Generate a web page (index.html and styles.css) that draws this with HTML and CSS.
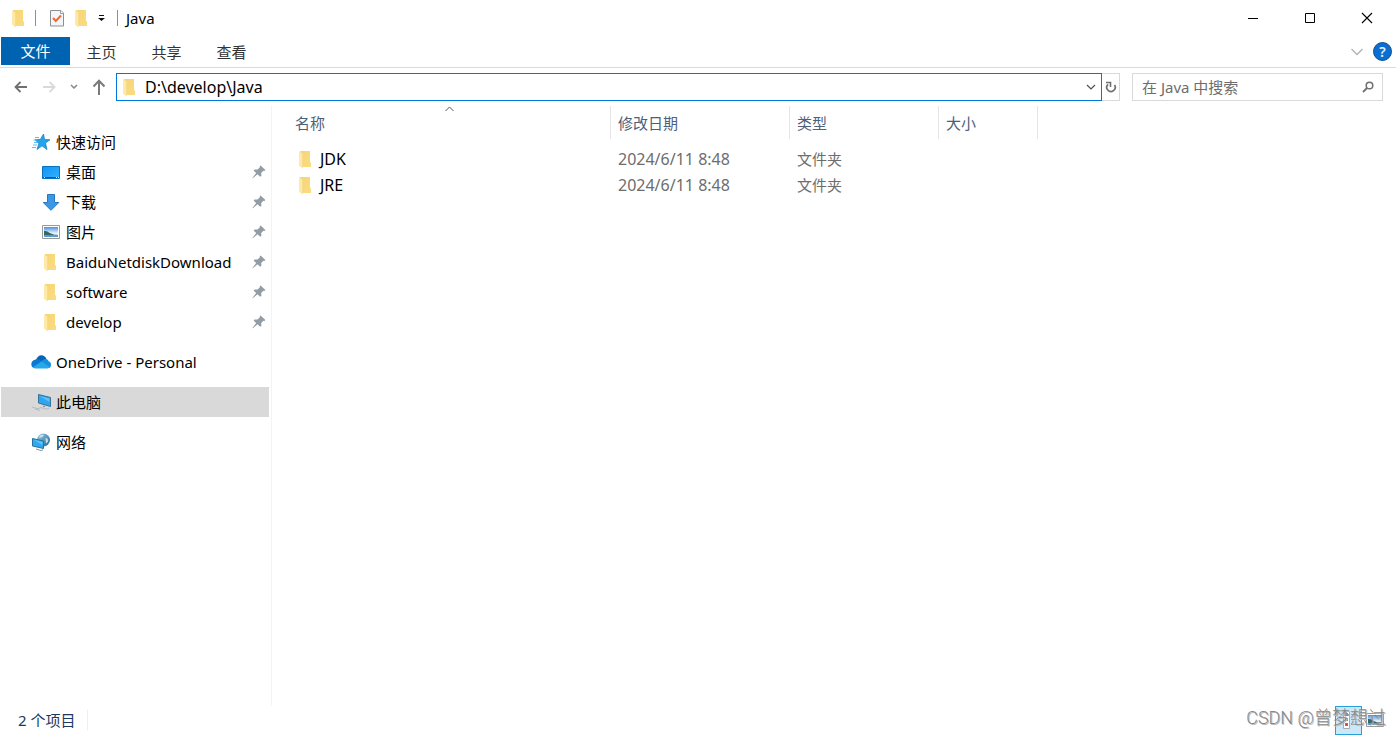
FILE: index.html
```html
<!DOCTYPE html>
<html lang="zh-CN">
<head>
<meta charset="utf-8">
<title>Java</title>
<link rel="stylesheet" href="styles.css">
</head>
<body>
<svg class="defs" aria-hidden="true">
  <defs>
    <linearGradient id="gold" x1="0" y1="0" x2="1" y2="1"><stop offset="0" stop-color="#f5d573"/><stop offset="1" stop-color="#fbdc84"/></linearGradient>
    <linearGradient id="blue" x1="0" y1="0" x2="1" y2="1"><stop offset="0" stop-color="#0f95f5"/><stop offset="1" stop-color="#35b0ff"/></linearGradient>
    <linearGradient id="sky" x1="0" y1="0" x2="0" y2="1"><stop offset="0" stop-color="#4a8fe0"/><stop offset=".6" stop-color="#e2f1fc"/></linearGradient>
    <linearGradient id="globe" x1="0" y1="0" x2="1" y2="1"><stop offset="0" stop-color="#9cc8dc"/><stop offset="1" stop-color="#22699c"/></linearGradient>
    <symbol id="folder" viewBox="0 0 14 18">
      <path d="M2 1h10v11l1 .5V17H4z" fill="url(#gold)"/>
      <path d="M1 1.200 4.800 4v13.200L4 18 1 15.700z" fill="#ffe9a8"/>
      <path d="M4.800 4v13.200L4 18V4z" fill="#f5d98a"/>
    </symbol>
    <symbol id="pin" viewBox="0 0 14 14">
      <path d="M8.600.6 13.400 5l-1 .9-1-.2-2.200 2.200.2 2.800-1.200 1-2.700-2.500L.8 13.300l-.4-.4 3.800-4.800-2.600-2.600 1-1.100 3 .1 2.300-2.200-.3-.9z" fill="#929ca4"/>
    </symbol>
    <symbol id="picture" viewBox="0 0 18 14">
      <path d="M.5.5h17v13H.5z" fill="#fff" stroke="#999"/>
      <path d="M2 2h14v10H2z" fill="url(#sky)"/>
      <path d="M2 6c3-.5 4 1 7 2.500s4 1 7 1.500H2z" fill="#35676a"/>
      <path d="M2 10h14v2H2z" fill="#5d9bcc"/>
    </symbol>
  </defs>
</svg>

<div class="window">
  <header class="titlebar">
    <svg class="folder" aria-hidden="true"><use href="#folder"/></svg>
    <span class="divider"></span>
    <button class="plain quick" aria-label="属性"><svg width="14" height="18" viewBox="0 0 14 18"><path d="M.5 1.500H11L13.500 4v13H.5z" fill="#f3f6f9" stroke="#8c8f92"/><path d="M10.500 1.500V4.500h3" fill="#fff" stroke="#999"/><path d="m3 9 2.800 3L11 6.500" fill="none" stroke="#ed6b32" stroke-width="2"/></svg></button>
    <button class="plain quick" aria-label="新建文件夹"><svg class="folder" aria-hidden="true"><use href="#folder"/></svg></button>
    <button class="plain quick" aria-label="自定义快速访问工具栏"><svg width="7" height="6" viewBox="0 0 7 6"><path d="M1 0h5v1H1zM0 3h7L3.500 6z" fill="#111"/></svg></button>
    <span class="divider"></span>
    <h1 class="title">Java</h1>
    <div class="controls">
      <button class="plain control" aria-label="最小化"><svg width="12" height="12"><path d="M1 6.500h10" stroke="#000"/></svg></button>
      <button class="plain control" aria-label="最大化"><svg width="12" height="12"><path d="M1.500 1.500h9v9h-9z" fill="none" stroke="#000"/></svg></button>
      <button class="plain control" aria-label="关闭"><svg width="12" height="12"><path d="m1 1 10 10M11 1 1 11" stroke="#000" stroke-width="1.100"/></svg></button>
    </div>
  </header>

  <nav class="ribbon">
    <button class="plain tab file">文件</button>
    <button class="plain tab">主页</button>
    <button class="plain tab">共享</button>
    <button class="plain tab">查看</button>
    <div class="ribbon-end">
      <button class="plain" aria-label="展开功能区"><svg width="12" height="8"><path d="m.5 1 5.500 5.500L11.500 1" fill="none" stroke="#b5b5b5" stroke-width="1.500"/></svg></button>
      <button class="plain help" aria-label="帮助">?</button>
    </div>
  </nav>

  <div class="navbar">
    <div class="arrows">
      <button class="plain" aria-label="后退"><svg width="14" height="14"><path d="M1.500 7H13M6.500 2l-5 5 5 5" fill="none" stroke="#707070" stroke-width="1.800"/></svg></button>
      <button class="plain" aria-label="前进"><svg width="14" height="14"><path d="M1 7h11.500M7.500 2l5 5-5 5" fill="none" stroke="#d9d9d9" stroke-width="1.800"/></svg></button>
      <button class="plain" aria-label="最近位置"><svg width="8" height="6"><path d="m1 1 3 3 3-3" fill="none" stroke="#858585" stroke-width="1.500"/></svg></button>
      <button class="plain" aria-label="上移"><svg width="14" height="16"><path d="M7 1.500V16M1.500 7.500 7 1.800l5.500 5.700" fill="none" stroke="#7a7a7a" stroke-width="2"/></svg></button>
    </div>
    <div class="address">
      <svg class="folder" aria-hidden="true"><use href="#folder"/></svg>
      <input class="field path" type="text" value="D:\develop\Java" aria-label="地址">
      <button class="plain" aria-label="以前的位置"><svg width="10" height="7"><path d="m1 1 4 4 4-4" fill="none" stroke="#505050" stroke-width="1.200"/></svg></button>
    </div>
    <button class="plain refresh" aria-label="刷新"><svg width="12" height="12" viewBox="0 0 12 12"><path d="M3 3.300A4.200 4.200 0 1 0 9.500 4" fill="none" stroke="#707070" stroke-width="1.700"/><path d="M1 1.500h4.500V6" fill="none" stroke="#707070" stroke-width="1.600"/></svg></button>
    <div class="search">
      <input class="field query" type="text" placeholder="在 Java 中搜索" aria-label="搜索">
      <button class="plain" aria-label="搜索"><svg width="12" height="12"><circle cx="7.500" cy="4.500" r="3.300" fill="none" stroke="#707070" stroke-width="1.500"/><path d="M5 7 1 11" stroke="#707070" stroke-width="1.800"/></svg></button>
    </div>
  </div>

  <div class="body">
    <aside class="sidebar">
      <a class="place" href="#quick">
        <svg class="icon" viewBox="0 0 20 18"><path d="m12.500 1 1 5.500 5.500.2-4.500 3.400 1.500 6.400-5-3.700-5 3.700 1.900-6L4 6.700l5.500-.4z" fill="#28a2ea" stroke="#1583c8" stroke-width=".8"/><path d="M4 4.500h4M2.500 7h4M3 9.500h3M2 12h4M1 14.500h4" stroke="#63baf0" stroke-width="1"/></svg>
        快速访问</a>
      <a class="place sub" href="#desktop">
        <svg class="icon" viewBox="0 0 20 18"><path d="M1.500 3.500h17v12h-17z" fill="url(#blue)" stroke="#0872bd"/><path d="M2 14.500h16" stroke="#075995"/><path d="M3 14.500h1m11 0h1m1 0h1" stroke="#fff"/></svg>
        桌面<svg class="pin" aria-hidden="true"><use href="#pin"/></svg></a>
      <a class="place sub" href="#downloads">
        <svg class="icon" viewBox="0 0 20 18"><path d="M6.500 1.500h7v8h4.300L10 17.300 2.200 9.500h4.300z" fill="#3c98e6" stroke="#2878be"/></svg>
        下载<svg class="pin" aria-hidden="true"><use href="#pin"/></svg></a>
      <a class="place sub" href="#pictures">
        <svg class="icon" viewBox="0 0 20 18"><use href="#picture" x="1" y="2" width="18" height="14"/></svg>
        图片<svg class="pin" aria-hidden="true"><use href="#pin"/></svg></a>
      <a class="place sub" href="#baidu">
        <svg class="icon" viewBox="0 0 20 18"><use href="#folder" x="2" y="0" width="14" height="18"/></svg>
        BaiduNetdiskDownload<svg class="pin" aria-hidden="true"><use href="#pin"/></svg></a>
      <a class="place sub" href="#software">
        <svg class="icon" viewBox="0 0 20 18"><use href="#folder" x="2" y="0" width="14" height="18"/></svg>
        software<svg class="pin" aria-hidden="true"><use href="#pin"/></svg></a>
      <a class="place sub" href="#develop">
        <svg class="icon" viewBox="0 0 20 18"><use href="#folder" x="2" y="0" width="14" height="18"/></svg>
        develop<svg class="pin" aria-hidden="true"><use href="#pin"/></svg></a>
      <a class="place group" href="#onedrive">
        <svg class="icon" viewBox="0 0 20 18"><path d="M5 7.500C6 1.500 13 0 15.500 6L10 11 4 9z" fill="#0364b8"/><path d="M4.500 6.500c3-1 5 .5 7 2L4 15.200C-1 15-1 7.500 4.500 6.500z" fill="#0b78d1"/><path d="M10 9c2-4 7-4 7.500-.8C21 9 20.500 14.500 18 15l-9-4z" fill="#1490df"/><path d="m2 14 8.500-5.500L19 14c-1 1.300-2 1.500-4 1.500H4z" fill="#28a8ea"/></svg>
        OneDrive - Personal</a>
      <a class="place group selected" href="#pc" aria-current="page">
        <svg class="icon" viewBox="0 0 20 18"><path d="m7.500 1.500 12 3v9l-12-3.500z" fill="#2fa5f0" stroke="#3a7195"/><path d="m8.500 3 10 2.500V9z" fill="#5cc2fa"/><path d="m12 13 2 .700" stroke="#71828c"/><path d="m1 14 6 1.800 3-1.300 5 1.700 3-1M4 16l5 1.500" fill="none" stroke="#a9b2b9" stroke-width=".8"/></svg>
        此电脑</a>
      <a class="place group" href="#network">
        <svg class="icon" viewBox="0 0 20 18"><circle cx="12.500" cy="7" r="6.500" fill="url(#globe)"/><path d="M9 2.500c2-1 3-1 4-.5l-1.500 2-3.500 1zM14.500 5l2 .5.500 3-2 2z" fill="#c8e3ee"/><path d="m1.500 5.500 11 2.500v7.500l-11-2.500z" fill="#2fa8f2" stroke="#29719d"/><path d="m2.500 6.800 9 2.200v3z" fill="#5fc5fb"/><path d="m5 16 5 1.500 2-.7" fill="none" stroke="#8496a2"/></svg>
        网络</a>
    </aside>

    <main class="files">
      <table class="list">
        <colgroup><col class="c-name"><col class="c-date"><col class="c-type"><col class="c-size"></colgroup>
        <thead>
          <tr>
            <th aria-sort="ascending">名称<svg class="sort" width="9" height="6"><path d="m.5 5 4-4 4 4" fill="none" stroke="#555"/></svg></th>
            <th>修改日期</th><th>类型</th><th>大小</th>
          </tr>
        </thead>
        <tbody>
          <tr><td class="name"><span class="entry"><svg class="folder" aria-hidden="true"><use href="#folder"/></svg>JDK</span></td><td class="date">2024/6/11 8:48</td><td>文件夹</td><td></td></tr>
          <tr><td class="name"><span class="entry"><svg class="folder" aria-hidden="true"><use href="#folder"/></svg>JRE</span></td><td class="date">2024/6/11 8:48</td><td>文件夹</td><td></td></tr>
        </tbody>
      </table>
    </main>
  </div>

  <footer class="status">
    <span class="count">2 个项目</span>
    <div class="views">
      <button class="plain view active" aria-label="详细信息"><svg width="20" height="20"><path d="M4.500 1.500h6v17h-6z" fill="#fff" stroke="#a5adb2"/><path d="M6 3h3v3H6zm0 5h3v3H6zm0 5h3v3H6z" fill="#71838f"/><path d="M7 9h1v1H7z" fill="#e09a35"/><path d="M7 14h1v1H7z" fill="#d4352b"/><path d="M12 4.500h6m-6 5h6m-6 5h6" stroke="#8da4b2"/></svg></button>
      <button class="plain view" aria-label="大图标"><svg width="18" height="14"><use href="#picture"/></svg></button>
    </div>
    <span class="watermark">CSDN @曾梦想过</span>
  </footer>
</div>
</body>
</html>
```
FILE: styles.css
```css
* { box-sizing: border-box; }

body {
  margin: 0;
  background: #fff;
  color: #000;
  font: 15px/20px "Noto Sans", "Noto Sans CJK SC", sans-serif;
}

svg { display: block; flex: none; }
.defs { position: absolute; width: 0; height: 0; }

.window { display: flex; flex-direction: column; min-height: 100vh; }

.plain {
  display: flex;
  align-items: center;
  justify-content: center;
  padding: 0;
  border: 0;
  background: none;
  color: inherit;
  font: inherit;
}

.folder { width: 14px; height: 18px; }

/* Title bar */
.titlebar { display: flex; align-items: center; height: 37px; padding: 0 1px 1px 11px; }
.divider { width: 1px; height: 16px; margin-left: 10px; background: #8f8f8f; }
.quick { margin-left: 10px; }
.quick + .divider { margin-left: 12px; }
.divider + .quick { margin-left: 14px; }
.title { margin: 0 0 0 8px; font-size: 15px; font-weight: 400; }
.controls { display: flex; align-self: stretch; margin-left: auto; }
.control { width: 57px; }

/* Ribbon tabs */
.ribbon {
  display: flex;
  align-items: flex-start;
  height: 31px;
  border-bottom: 1px solid #dadbdc;
  color: #333;
}
.tab { width: 65px; height: 29px; }
.tab.file { width: 69px; height: 28px; margin-left: 1px; margin-right: -1px; background: #0063b1; color: #fff; }
.ribbon-end { display: flex; align-items: center; gap: 10px; height: 29px; margin-left: auto; padding-right: 4px; }
.help {
  width: 19px;
  height: 19px;
  border: 1px solid #0a4f94;
  border-radius: 50%;
  background: #0a6fd0;
  color: #e3f0fb;
  font-size: 14px;
  font-weight: 600;
}

/* Navigation row */
.navbar { display: flex; align-items: center; height: 38px; padding: 0 13px 0 14px; }
.arrows { display: flex; align-items: center; gap: 14px; width: 102px; }
.address {
  display: flex;
  flex: 1;
  align-items: center;
  height: 28px;
  padding: 0 5px;
  border: 1px solid #0078d7;
}
.field { flex: 1; min-width: 0; padding: 0; border: 0; outline: 0; background: none; font: inherit; }
.path { margin-left: 9px; color: #000; font-size: 16px; }
.refresh { width: 18px; height: 28px; border: 1px solid #d9d9d9; border-left: 0; }
.search {
  display: flex;
  align-items: center;
  width: 251px;
  height: 28px;
  margin-left: 12px;
  padding: 0 8px 1px 9px;
  border: 1px solid #d9d9d9;
}
.query::placeholder { color: #6d6d6d; opacity: 1; }

/* Sidebar */
.body { display: flex; flex: 1; }
.sidebar { width: 272px; padding: 21px 2px 0 1px; border-right: 1px solid #f3f3f3; }
.place {
  display: flex;
  align-items: center;
  height: 30px;
  padding: 0 3px 0 30px;
  color: #000;
  text-decoration: none;
  white-space: nowrap;
}
.place.sub { padding-left: 40px; }
.place.group { margin-top: 10px; }
.place.selected { background: #d9d9d9; }
.icon { width: 20px; height: 18px; margin-right: 5px; }
.pin { width: 14px; height: 14px; margin-left: auto; }

/* File list */
.files { flex: 1; padding-left: 15px; }
.list { width: 751px; border-collapse: separate; border-spacing: 0; table-layout: fixed; }
.c-name { width: 324px; }
.c-date { width: 179px; }
.c-type { width: 149px; }
.c-size { width: 99px; }
.list th {
  position: relative;
  height: 33px;
  padding: 0 7px;
  border-right: 1px solid #e5e5e5;
  color: #4c607a;
  font-weight: 400;
  text-align: left;
}
.list th:first-child { padding-left: 8px; }
.sort { position: absolute; top: 0; left: calc(50% - 4px); }
.list td { height: 26px; padding: 0 7px; color: #6d6d6d; }
.list .name, .list .date { font-size: 16px; }
.list tbody::before { content: ""; display: block; height: 7px; }
.entry { display: flex; align-items: center; gap: 8px; padding-left: 4px; color: #000; }

/* Status bar */
.status { position: relative; display: flex; align-items: center; height: 30px; padding: 0 8px 2px 18px; }
.count { padding-right: 12px; border-right: 1px solid #f0f0f0; color: #1e395b; }
.views { display: flex; align-items: center; margin-left: auto; }
.view { width: 26px; height: 29px; }
.view.active { width: 27px; border: 1px solid #26a0da; background: #cce8f7; }
.watermark {
  position: absolute;
  right: 10px;
  bottom: 6px;
  color: #888;
  font: 18px/24px Roboto, "Noto Sans CJK SC", sans-serif;
  font-weight: 300;
  text-shadow: 1px 1px 0 #bbb;
  white-space: nowrap;
}
```
